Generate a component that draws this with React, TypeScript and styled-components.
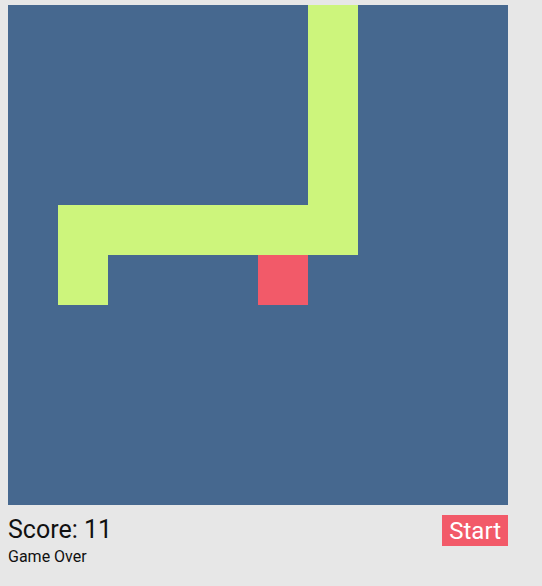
import React from "react";
import styled, { createGlobalStyle } from "styled-components";

const GlobalStyle = createGlobalStyle`
  html, body {
    margin: 0;
    padding: 0;
    background: #e7e7e7;
    font-family: Roboto, "Liberation Sans", sans-serif;
  }
`;

const CELL = 50;

const Page = styled.div`
  padding: 5px 8px;
`;

const Board = styled.div`
  width: 500px;
  height: 500px;
  background: #46688f;
  display: grid;
  grid-template-columns: repeat(10, ${CELL}px);
  grid-template-rows: repeat(10, ${CELL}px);
`;

const Cell = styled.div<{ $x: number; $y: number; $kind: "snake" | "food" }>`
  grid-column: ${(p) => p.$x + 1};
  grid-row: ${(p) => p.$y + 1};
  background: ${(p) => (p.$kind === "snake" ? "#cdf57c" : "#f25a69")};
`;

const Footer = styled.div`
  width: 500px;
  margin-top: 10px;
  display: flex;
  justify-content: space-between;
  align-items: flex-start;
`;

const Info = styled.div`
  display: flex;
  flex-direction: column;
`;

const Score = styled.div`
  font-size: 25px;
  line-height: 29px;
  color: #111;
`;

const Status = styled.div`
  font-size: 16px;
  line-height: 19px;
  margin-top: 3px;
  color: #111;
`;

const StartButton = styled.button`
  font-family: Roboto, "Liberation Sans", sans-serif;
  font-size: 24px;
  line-height: 28px;
  padding: 2px 7px 1px;
  border: none;
  background: #f25a69;
  color: #fff;
  cursor: pointer;
`;

const snake: [number, number][] = [
  [6, 0],
  [6, 1],
  [6, 2],
  [6, 3],
  [6, 4],
  [5, 4],
  [4, 4],
  [3, 4],
  [2, 4],
  [1, 4],
  [1, 5],
];
const food: [number, number] = [5, 5];

export default function App() {
  return (
    <>
      <GlobalStyle />
      <Page>
        <Board>
          {snake.map(([x, y]) => (
            <Cell key={`${x}-${y}`} $x={x} $y={y} $kind="snake" />
          ))}
          <Cell $x={food[0]} $y={food[1]} $kind="food" />
        </Board>
        <Footer>
          <Info>
            <Score>Score: 11</Score>
            <Status>Game Over</Status>
          </Info>
          <StartButton>Start</StartButton>
        </Footer>
      </Page>
    </>
  );
}
